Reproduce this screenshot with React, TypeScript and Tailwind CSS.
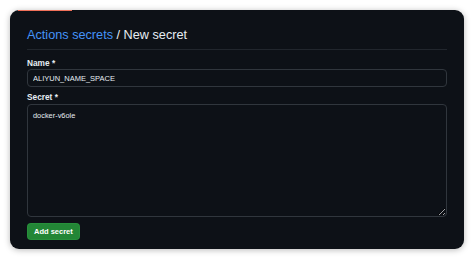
export default function App() {
  return (
    <div className="min-h-screen bg-white p-[10px] font-['Liberation_Sans',Arial,sans-serif]">
      <div className="relative w-[454px] h-[239px] rounded-[9px] bg-[#0d1117] shadow-[0_1px_6px_rgba(0,0,0,0.28)] px-[17px]">
        {/* tab underline peeking from above */}
        <div className="absolute left-[8px] top-0 w-[54px] h-[1px] bg-[#f0715a]" />

        <div className="pt-[16px] pb-[5px] border-b border-[#21262d]">
          <h2 className="text-[12.7px] leading-[18px] text-[#e6edf3]">
            <span className="text-[#4493f8]">Actions secrets</span> / New secret
          </h2>
        </div>

        <form onSubmit={(e) => e.preventDefault()}>
          <label className="block mt-[7px] text-[8.3px] leading-[12px] font-bold text-[#e6edf3]">
            Name *
          </label>
          <input
            defaultValue="ALIYUN_NAME_SPACE"
            className="block w-full h-[18px] px-[5px] text-[7.5px] text-[#e6edf3] bg-[#0d1117] border border-[#30363d] rounded-[4px] outline-none"
          />

          <label className="block mt-[4px] text-[8.3px] leading-[12px] font-bold text-[#e6edf3]">
            Secret *
          </label>
          <textarea
            defaultValue="docker-v6ole"
            className="block w-full mt-[1px] h-[113px] px-[5px] pt-[6px] text-[7.4px] leading-[10px] text-[#e6edf3] bg-[#0d1117] border border-[#30363d] rounded-[4px] outline-none"
          />

          <button
            type="submit"
            className="mt-[5px] h-[17px] px-[6px] rounded-[4px] bg-[#238636] border border-[#2ea043]/40 text-[7.5px] font-bold text-white"
          >
            Add secret
          </button>
        </form>
      </div>
    </div>
  )
}
